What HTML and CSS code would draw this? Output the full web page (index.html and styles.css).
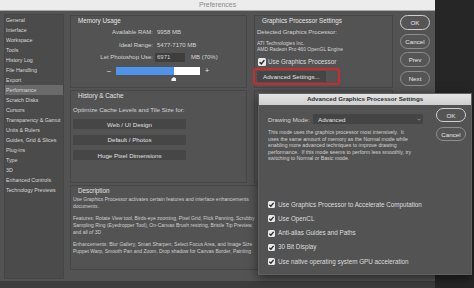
FILE: index.html
```html
<!DOCTYPE html>
<html lang="en">
<head>
    <meta charset="UTF-8">
    <meta name="viewport" content="width=device-width, initial-scale=1.0">
    <title>Preferences</title>
    <link rel="stylesheet" href="styles.css">
</head>
<body>
    <div class="screen">
        <div class="prefs">
            <div class="titlebar">Preferences</div>
            <div class="prefs-body">
                <ul class="sidebar">
                    <li>General</li>
                    <li>Interface</li>
                    <li>Workspace</li>
                    <li>Tools</li>
                    <li>History Log</li>
                    <li>File Handling</li>
                    <li>Export</li>
                    <li class="active">Performance</li>
                    <li>Scratch Disks</li>
                    <li>Cursors</li>
                    <li>Transparency &amp; Gamut</li>
                    <li>Units &amp; Rulers</li>
                    <li>Guides, Grid &amp; Slices</li>
                    <li>Plug-ins</li>
                    <li>Type</li>
                    <li>3D</li>
                    <li>Enhanced Controls</li>
                    <li>Technology Previews</li>
                </ul>

                <div class="content">
                    <div class="row">
                        <section class="panel memory">
                            <h2>Memory Usage</h2>
                            <div class="mem-grid">
                                <span class="label">Available RAM:</span>
                                <span class="value">9958 MB</span>
                                <span class="label">Ideal Range:</span>
                                <span class="value">5477-7170 MB</span>
                                <span class="label">Let Photoshop Use:</span>
                                <span class="value use"><span class="input">6971</span>MB (70%)</span>
                            </div>
                            <div class="slider">
                                <span class="sign">–</span>
                                <div class="track">
                                    <div class="fill" style="width: 69%"></div>
                                    <span class="thumb" style="left: 69%"></span>
                                </div>
                                <span class="sign">+</span>
                            </div>
                        </section>

                        <section class="panel gpu">
                            <h2>Graphics Processor Settings</h2>
                            <p class="detected">Detected Graphics Processor:</p>
                            <p class="card">ATI Technologies Inc.<br>AMD Radeon Pro 460 OpenGL Engine</p>
                            <label class="check">
                                <span class="box"><svg viewBox="0 0 8 8"><path d="M1.6 4.2 3.3 5.9 6.4 2.1" fill="none" stroke="#2a2a2a" stroke-width="1.5"/></svg></span>
                                Use Graphics Processor
                            </label>
                            <button class="adv">Advanced Settings...</button>
                            <span class="callout"></span>
                        </section>
                    </div>

                    <div class="row">
                        <section class="panel cache">
                            <h2>History &amp; Cache</h2>
                            <p class="hint">Optimize Cache Levels and Tile Size for:</p>
                            <div class="preset-list">
                                <button class="preset">Web / UI Design</button>
                                <button class="preset">Default / Photos</button>
                                <button class="preset">Huge Pixel Dimensions</button>
                            </div>
                        </section>
                        <section class="panel history"></section>
                    </div>

                    <section class="panel description">
                        <h2>Description</h2>
                        <div class="desc-text">
                            <p>Use Graphics Processor activates certain features and interface enhancements<br>documents.</p>
                            <p>Features: Rotate View tool, Birds-eye zooming, Pixel Grid, Flick Panning, Scrubby<br>Sampling Ring (Eyedropper Tool), On-Canvas Brush resizing, Bristle Tip Preview,<br>and all of 3D</p>
                            <p>Enhancements: Blur Gallery, Smart Sharpen, Select Focus Area, and Image Size<br>Puppet Warp, Smooth Pan and Zoom, Drop shadow for Canvas Border, Painting</p>
                        </div>
                    </section>
                </div>

                <div class="actions">
                    <button class="pill default">OK</button>
                    <button class="pill">Cancel</button>
                    <button class="pill">Prev</button>
                    <button class="pill">Next</button>
                </div>
            </div>
        </div>
        <div class="desk"></div>

        <div class="dialog">
            <div class="dialog-title">Advanced Graphics Processor Settings</div>
            <div class="dialog-body">
                <div class="dialog-main">
                    <div class="mode-row">
                        <span class="mode-label">Drawing Mode:</span>
                        <div class="select">
                            <span>Advanced</span>
                            <svg class="chevron" viewBox="0 0 4 3"><path d="M0.5 0.7 2 2.2 3.5 0.7" fill="none" stroke="#a8a8a8" stroke-width="0.7"/></svg>
                        </div>
                    </div>
                    <p class="mode-desc">This mode uses the graphics processor most intensively.&nbsp; It<br>uses the same amount of memory as the Normal mode while<br>enabling more advanced techniques to improve drawing<br>performance.&nbsp; If this mode seems to perform less smoothly, try<br>switching to Normal or Basic mode.</p>
                    <div class="checks">
                        <label class="check">
                            <span class="box"><svg viewBox="0 0 8 8"><path d="M1.6 4.2 3.3 5.9 6.4 2.1" fill="none" stroke="#2a2a2a" stroke-width="1.5"/></svg></span>
                            Use Graphics Processor to Accelerate Computation
                        </label>
                        <label class="check">
                            <span class="box"><svg viewBox="0 0 8 8"><path d="M1.6 4.2 3.3 5.9 6.4 2.1" fill="none" stroke="#2a2a2a" stroke-width="1.5"/></svg></span>
                            Use OpenCL
                        </label>
                        <label class="check">
                            <span class="box"><svg viewBox="0 0 8 8"><path d="M1.6 4.2 3.3 5.9 6.4 2.1" fill="none" stroke="#2a2a2a" stroke-width="1.5"/></svg></span>
                            Anti-alias Guides and Paths
                        </label>
                        <label class="check">
                            <span class="box"><svg viewBox="0 0 8 8"><path d="M1.6 4.2 3.3 5.9 6.4 2.1" fill="none" stroke="#2a2a2a" stroke-width="1.5"/></svg></span>
                            30 Bit Display
                        </label>
                        <label class="check">
                            <span class="box"><svg viewBox="0 0 8 8"><path d="M1.6 4.2 3.3 5.9 6.4 2.1" fill="none" stroke="#2a2a2a" stroke-width="1.5"/></svg></span>
                            Use native operating system GPU acceleration
                        </label>
                    </div>
                </div>
                <div class="dialog-actions">
                    <button class="pill default">OK</button>
                    <button class="pill">Cancel</button>
                </div>
            </div>
        </div>
    </div>
</body>
</html>
```

FILE: styles.css
```css
* {
    box-sizing: border-box;
    margin: 0;
    padding: 0;
}

body {
    width: 474px;
    height: 288px;
    overflow: hidden;
    font-family: 'Liberation Sans', Arial, sans-serif;
    background-color: #262626;
    color: #d4d4d4;
}

button {
    font-family: inherit;
    border: none;
    color: inherit;
    cursor: pointer;
}

.screen {
    position: relative;
    display: flex;
    width: 474px;
    height: 288px;
}

/* Preferences window */
.prefs {
    width: 435px;
    display: flex;
    flex-direction: column;
    background-color: #3d3d3d;
}

.titlebar {
    height: 11px;
    background-color: #ececec;
    border-bottom: 1px solid #a9a9a9;
    color: #8a8a8a;
    font-size: 6.9px;
    line-height: 10px;
    text-align: center;
}

.prefs-body {
    height: 270px;
    display: flex;
    gap: 6px;
    padding: 4px 5px 0 4px;
    background-color: #535353;
}

.sidebar {
    list-style: none;
    width: 60px;
    height: 265px;
    margin-top: -1px;
    background-color: #4b4b4b;
    border: 1px solid #454545;
    font-size: 5.3px;
}

.sidebar li {
    height: 10px;
    line-height: 10px;
    padding-left: 1px;
    color: #d8d8d8;
    white-space: nowrap;
}

.sidebar li.active {
    background-color: #6a6a6a;
}

.content {
    width: 323px;
    display: flex;
    flex-direction: column;
    gap: 2px;
}

.row {
    display: flex;
    gap: 7px;
}

.panel {
    border: 1px solid #464646;
}

.panel h2 {
    font-size: 6.3px;
    font-weight: normal;
    line-height: 9px;
    padding-left: 7px;
    color: #e4e4e4;
}

.memory,
.cache {
    width: 177px;
}

.gpu,
.history {
    width: 139px;
}

.memory,
.gpu {
    height: 73px;
}

.cache,
.history {
    height: 93px;
}

.description {
    height: 85px;
}

/* Memory usage */
.mem-grid {
    display: grid;
    grid-template-columns: 75px auto;
    grid-auto-rows: 10px;
    row-gap: 2.5px;
    column-gap: 2px;
    margin: 2px 0 0 7px;
    font-size: 6px;
    line-height: 10px;
}

.mem-grid .label {
    text-align: right;
    white-space: nowrap;
}

.mem-grid .value {
    padding-left: 2px;
    white-space: nowrap;
}

.mem-grid .value.use {
    padding-left: 0;
    display: flex;
    align-items: center;
    gap: 6px;
}

.input {
    width: 30px;
    height: 9px;
    padding-left: 2px;
    line-height: 9px;
    background-color: #3e3e3e;
}

.slider {
    display: flex;
    align-items: center;
    gap: 3px;
    height: 8px;
    margin: 5px 0 0 34px;
}

.sign {
    width: 8px;
    text-align: center;
    font-size: 7px;
    line-height: 8px;
    color: #eeeeee;
}

.track {
    position: relative;
    width: 84px;
    height: 8px;
    background-color: #ffffff;
}

.fill {
    height: 100%;
    background-color: #4f94ea;
}

.thumb {
    position: absolute;
    top: 10px;
    width: 5px;
    height: 4px;
    margin-left: -2.5px;
    background-color: #f2f2f2;
    clip-path: polygon(50% 0, 100% 45%, 100% 100%, 0 100%, 0 45%);
}

/* Graphics processor */
.gpu {
    position: relative;
}

.detected {
    font-size: 6px;
    line-height: 10px;
    margin-top: 2px;
    padding-left: 2px;
}

.card {
    font-size: 5px;
    line-height: 6px;
    margin-top: 3px;
    padding-left: 2px;
    white-space: nowrap;
}

.check {
    display: flex;
    align-items: center;
    gap: 2px;
    height: 10px;
    font-size: 6.3px;
    line-height: 10px;
    color: #dddddd;
    white-space: nowrap;
}

.gpu .check {
    margin: 5px 0 0 3px;
}

.box {
    display: flex;
    width: 8px;
    height: 8px;
    background-color: #e8e8e8;
    border-radius: 1.5px;
}

.box svg {
    width: 100%;
    height: 100%;
}

.adv {
    display: block;
    width: 69px;
    height: 11px;
    margin: 4px 0 0 2px;
    padding-left: 6px;
    text-align: left;
    font-size: 6.2px;
    background-color: #454545;
    color: #e2e2e2;
    border-radius: 1px;
}

.callout {
    position: absolute;
    left: -2px;
    top: 52px;
    width: 87px;
    height: 17px;
    border: 2px solid #cc2a2f;
    border-radius: 3px;
}

/* History & cache */
.hint {
    font-size: 6.2px;
    line-height: 10px;
    margin-top: 5px;
    padding-left: 2px;
    white-space: nowrap;
}

.preset-list {
    display: flex;
    flex-direction: column;
    gap: 5.5px;
    margin: 4px 0 0 2px;
}

.preset {
    width: 113px;
    height: 10px;
    font-size: 6.2px;
    background-color: #464646;
    color: #e0e0e0;
    border-radius: 1px;
}

/* Description - only the part left of the dialog is visible */
.desc-text {
    margin-top: 1px;
    padding-left: 2px;
    font-size: 5px;
    line-height: 7px;
    color: #cfcfcf;
    white-space: nowrap;
}

.desc-text p + p {
    margin-top: 5px;
}

/* Buttons on the right */
.actions {
    display: flex;
    flex-direction: column;
    gap: 3.5px;
    margin-left: 1px;
}

.pill {
    width: 30px;
    height: 15px;
    border: 1px solid #8e8e8e;
    border-radius: 8px;
    background-color: #555555;
    font-size: 6.2px;
    color: #e6e6e6;
}

.pill.default {
    border-color: #cfcfcf;
}

.desk {
    flex: 1;
    background-color: #262626;
}

/* Advanced dialog */
.dialog {
    position: absolute;
    left: 258px;
    top: 93px;
    width: 214px;
    height: 182px;
    display: flex;
    flex-direction: column;
    background-color: #535353;
    border: 1px solid #606060;
    box-shadow: 0 3px 10px rgba(0, 0, 0, 0.55);
}

.dialog-title {
    height: 11px;
    background: linear-gradient(#e4e4e4, #cfcfcf);
    color: #2c2c2c;
    font-weight: bold;
    font-size: 6.2px;
    line-height: 10px;
    text-align: center;
}

.dialog-body {
    flex: 1;
    display: flex;
    padding: 0 5px 0 9px;
}

.dialog-main {
    flex: 1;
    padding-top: 9px;
}

.mode-row {
    display: flex;
    align-items: center;
    height: 10px;
    font-size: 6.2px;
}

.mode-label {
    width: 45px;
}

.select {
    display: flex;
    justify-content: space-between;
    align-items: center;
    width: 110px;
    height: 10px;
    padding: 0 2px 0 5px;
    background-color: #444444;
    color: #e4e4e4;
}

.chevron {
    width: 4px;
    height: 3px;
}

.mode-desc {
    margin-top: 5px;
    font-size: 5.2px;
    line-height: 6.5px;
    color: #d2d2d2;
    white-space: nowrap;
}

.checks {
    display: flex;
    flex-direction: column;
    gap: 4.25px;
    margin-top: 38px;
}

.dialog .check {
    gap: 3px;
}

.dialog .box {
    width: 7px;
    height: 7px;
}

.dialog-actions {
    display: flex;
    flex-direction: column;
    gap: 5px;
    padding-top: 3px;
    margin-left: 13px;
}

.dialog-actions .pill {
    height: 14px;
}
```
